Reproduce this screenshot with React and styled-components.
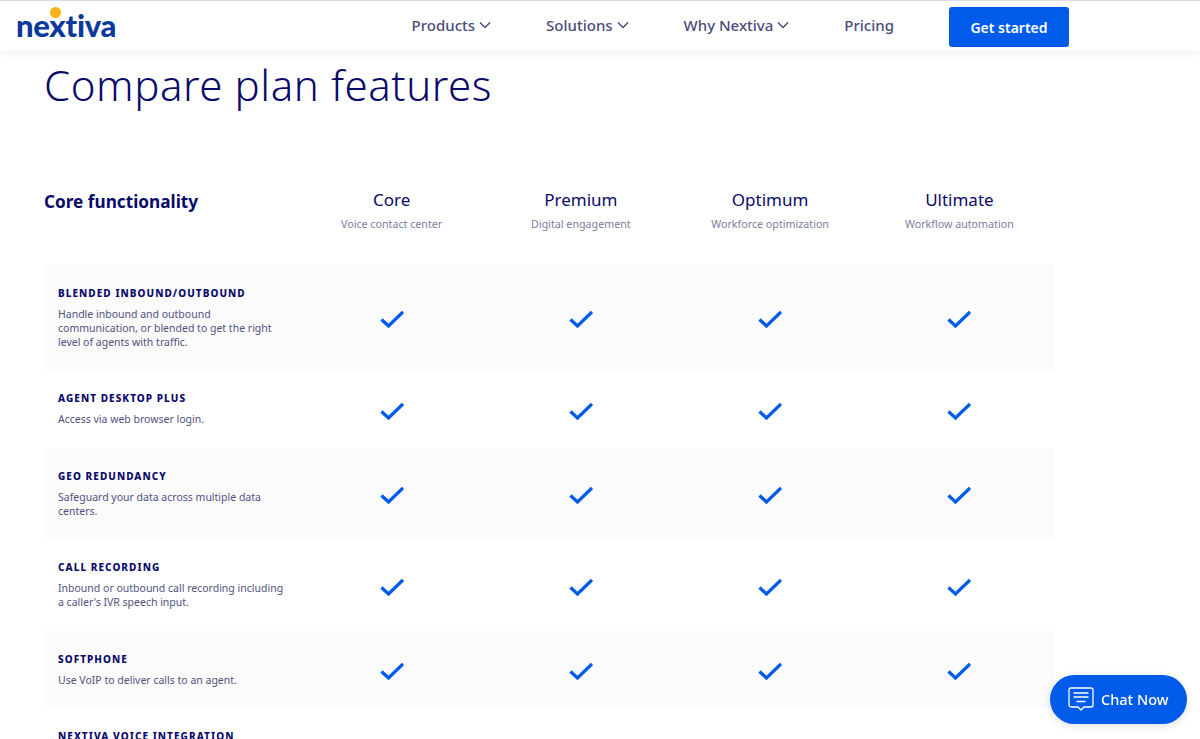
import React from 'react';
import styled, { createGlobalStyle } from 'styled-components';

const plans = [
  { name: 'Core', sub: 'Voice contact center' },
  { name: 'Premium', sub: 'Digital engagement' },
  { name: 'Optimum', sub: 'Workforce optimization' },
  { name: 'Ultimate', sub: 'Workflow automation' },
];

const features = [
  {
    title: 'Blended inbound/outbound',
    text: 'Handle inbound and outbound communication, or blended to get the right level of agents with traffic.',
    height: 105,
    shaded: true,
  },
  { title: 'Agent desktop plus', text: 'Access via web browser login.', height: 78.4 },
  {
    title: 'Geo redundancy',
    text: 'Safeguard your data across multiple data centers.',
    height: 91,
    shaded: true,
  },
  {
    title: 'Call recording',
    text: "Inbound or outbound call recording including a caller's IVR speech input.",
    height: 91.6,
  },
  { title: 'Softphone', text: 'Use VoIP to deliver calls to an agent.', height: 77, shaded: true },
  { title: 'Nextiva voice integration', text: 'Connect your Nextiva voice service.', height: 91 },
];

const Check = () => (
  <CheckIcon viewBox="0 0 24 20" aria-hidden="true">
    <path d="M1.500 10.500L8.500 17L23 3" />
  </CheckIcon>
);

const Chevron = () => (
  <svg width="12" height="8" viewBox="0 0 12 8" fill="none" stroke="currentColor" strokeWidth="1.5">
    <path d="M1 1.500l5 5 5-5" />
  </svg>
);

const App = () => {
  return (
    <Page>
      <GlobalStyle />
      <Header>
        <Logo>
          <LogoDot />
          nextiva
        </Logo>
        <Nav>
          <NavItem>Products <Chevron /></NavItem>
          <NavItem>Solutions <Chevron /></NavItem>
          <NavItem>Why Nextiva <Chevron /></NavItem>
          <NavItem>Pricing</NavItem>
          <StartButton>Get started</StartButton>
        </Nav>
      </Header>

      <Main>
        <Title>Compare plan features</Title>

        <TableHead>
          <SectionTitle>Core functionality</SectionTitle>
          {plans.map((plan) => (
            <Plan key={plan.name}>
              <PlanName>{plan.name}</PlanName>
              <PlanSub>{plan.sub}</PlanSub>
            </Plan>
          ))}
        </TableHead>

        {features.map((feature) => (
          <Row key={feature.title} $height={feature.height} $shaded={feature.shaded}>
            <Feature>
              <FeatureTitle>{feature.title}</FeatureTitle>
              <FeatureText>{feature.text}</FeatureText>
            </Feature>
            {plans.map((plan) => (
              <CheckCell key={plan.name}>
                <Check />
              </CheckCell>
            ))}
          </Row>
        ))}
      </Main>

      <ChatButton>
        <svg width="26" height="24" viewBox="0 0 26 24" fill="none" stroke="#fff" strokeWidth="1.3">
          <path d="M3 1h20a2 2 0 0 1 2 2v15a2 2 0 0 1-2 2h-7l-3 3-3-3H3a2 2 0 0 1-2-2V3a2 2 0 0 1 2-2z" />
          <path d="M5.500 6h15M5.500 10h15M8.500 14.500h9" />
        </svg>
        Chat Now
      </ChatButton>
    </Page>
  );
};

const GlobalStyle = createGlobalStyle`
  html, body {
    margin: 0;
    height: 100%;
    overflow: hidden;
    background: #fff;
  }
  * {
    box-sizing: border-box;
  }
`;

const Page = styled.div`
  height: 739px;
  overflow: hidden;
  font-family: "Noto Sans", "Liberation Sans", sans-serif;
  color: #0a0a6b;
`;

const Header = styled.header`
  height: 50px;
  display: flex;
  align-items: center;
  padding: 0 131px 0 16px;
  background: #fff;
  border-top: 1px solid #dcdce4;
  box-shadow: 0 3px 12px rgba(0, 0, 0, 0.06);
`;

const Logo = styled.div`
  position: relative;
  font-family: "Lato", sans-serif;
  font-size: 31px;
  font-weight: 900;
  letter-spacing: -0.3px;
  line-height: 1;
  color: #0c3a9c;
  margin-top: -1px;
`;

const LogoDot = styled.span`
  position: absolute;
  top: -3px;
  left: 34px;
  width: 11px;
  height: 11px;
  border-radius: 50%;
  background: #fbb31c;
`;

const Nav = styled.nav`
  margin-left: auto;
  display: flex;
  align-items: center;
  gap: 55px;
`;

const NavItem = styled.a`
  display: flex;
  align-items: center;
  gap: 4px;
  font-size: 15px;
  font-weight: 500;
  color: #4a4c7c;
  margin-top: -2px;
`;

const StartButton = styled.button`
  width: 120px;
  height: 40px;
  margin-top: 3px;
  border: 0;
  border-radius: 3px;
  background: #005be8;
  color: #fff;
  font-family: inherit;
  font-size: 14px;
  font-weight: 600;
  padding-top: 2px;
`;

const Main = styled.main`
  padding: 9px 146px 0 44px;
`;

const Title = styled.h1`
  margin: 0;
  font-size: 42px;
  line-height: 52px;
  font-weight: 300;
  letter-spacing: 0.58px;
  color: #0a0a6b;
`;

const TableHead = styled.div`
  display: grid;
  grid-template-columns: 253px repeat(4, 1fr);
  height: 154px;
  padding-top: 78px;
`;

const SectionTitle = styled.h2`
  margin: 1px 0 0;
  font-size: 17.2px;
  line-height: 24px;
  font-weight: 700;
  color: #0a0a6b;
`;

const Plan = styled.div`
  text-align: center;
`;

const PlanName = styled.div`
  font-size: 17px;
  font-weight: 400;
  line-height: 24px;
  margin-top: -1px;
`;

const PlanSub = styled.div`
  margin-top: 5px;
  font-size: 10.7px;
  line-height: 14px;
  color: #7c7e9c;
`;

const Row = styled.div`
  display: grid;
  grid-template-columns: 253px repeat(4, 1fr);
  height: ${(props) => props.$height}px;
  background: ${(props) => (props.$shaded ? '#fbfbfc' : '#fff')};
`;

const Feature = styled.div`
  padding: 21px 0 0 14px;
`;

const FeatureTitle = styled.div`
  font-size: 10px;
  line-height: 14px;
  font-weight: 800;
  letter-spacing: 1.05px;
  text-transform: uppercase;
  color: #0a0a6b;
`;

const FeatureText = styled.p`
  margin: 7px 0 0;
  width: 232px;
  font-size: 10.5px;
  line-height: 14px;
  color: #50527e;
`;

const CheckCell = styled.div`
  display: flex;
  justify-content: center;
  align-items: center;
  padding-top: 3px;
`;

const CheckIcon = styled.svg`
  width: 24px;
  height: 20px;
  fill: none;
  stroke: #005be8;
  stroke-width: 3.3;
`;

const ChatButton = styled.button`
  position: fixed;
  left: 1050px;
  top: 675px;
  width: 137px;
  height: 49px;
  display: flex;
  align-items: center;
  gap: 7px;
  padding: 0 0 2px 18px;
  border: 0;
  border-radius: 25px;
  background: #005be8;
  box-shadow: 0 2px 8px rgba(0, 0, 40, 0.12);
  color: #fff;
  font-family: inherit;
  font-size: 14.500px;
  font-weight: 500;
`;

export default App;
